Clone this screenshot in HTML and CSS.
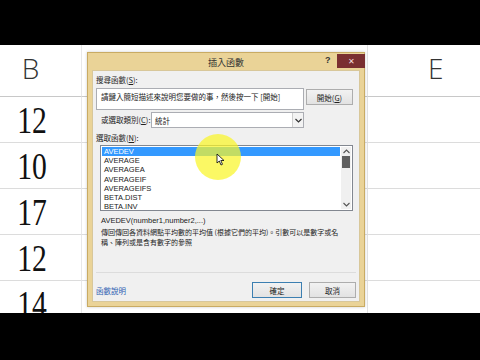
FILE: index.html
```html
<!DOCTYPE html>
<html>
<head>
<meta charset="utf-8">
<link rel="stylesheet" href="styles.css">
</head>
<body>
<div class="screen">
  <div class="bar-top"></div>
  <div class="sheet">
    <div class="cell head colb">B</div>
    <div class="cell head mid"></div>
    <div class="cell head cole">E</div>
    <div class="cell num colb"><span>12</span></div><div class="cell mid"></div><div class="cell cole"></div>
    <div class="cell num colb"><span>10</span></div><div class="cell mid"></div><div class="cell cole"></div>
    <div class="cell num colb"><span>17</span></div><div class="cell mid"></div><div class="cell cole"></div>
    <div class="cell num colb"><span>12</span></div><div class="cell mid"></div><div class="cell cole"></div>
    <div class="cell num colb last"><span>14</span></div><div class="cell mid last"></div><div class="cell cole last"></div>
  </div>
  <div class="bar-bottom"></div>

  <div class="dialog">
    <div class="titlebar">
      <span class="title">插入函數</span>
      <span class="help">?</span>
      <span class="close">✕</span>
    </div>
    <div class="client">
      <div class="lbl">搜尋函數(<u>S</u>):</div>
      <div class="row search-row">
        <div class="textbox">請鍵入簡短描述來說明您要做的事，然後按一下 [開始]</div>
        <div class="btn go">開始(<u>G</u>)</div>
      </div>
      <div class="row cat-row">
        <span class="lbl cat-lbl">或選取類別(<u>C</u>):</span>
        <div class="select"><span>統計</span><span class="arrow">
          <svg width="7" height="5" viewBox="0 0 7 5"><path d="M0.5 1 L3.5 4 L6.5 1" fill="none" stroke="#333" stroke-width="1.2"/></svg>
        </span></div>
      </div>
      <div class="lbl pick-lbl">選取函數(<u>N</u>):</div>
      <div class="listbox">
        <ul class="items">
          <li class="sel">AVEDEV</li>
          <li>AVERAGE</li>
          <li>AVERAGEA</li>
          <li>AVERAGEIF</li>
          <li>AVERAGEIFS</li>
          <li>BETA.DIST</li>
          <li>BETA.INV</li>
        </ul>
        <div class="scroll">
          <svg class="sarrow" width="7" height="5" viewBox="0 0 7 5"><path d="M0.5 4 L3.5 1 L6.5 4" fill="none" stroke="#555" stroke-width="1.1"/></svg>
          <div class="thumb"></div>
          <div class="track"></div>
          <svg class="sarrow" width="7" height="5" viewBox="0 0 7 5"><path d="M0.5 1 L3.5 4 L6.5 1" fill="none" stroke="#555" stroke-width="1.1"/></svg>
        </div>
      </div>
      <div class="sig">AVEDEV(number1,number2,...)</div>
      <div class="desc">傳回傳回各資料網點平均數的平均值 (根據它們的平均)。引數可以是數字或名稱、陣列或是含有數字的參照</div>
      <div class="footer">
        <a class="link">函數說明</a>
        <div class="btns">
          <div class="btn ok">確定</div>
          <div class="btn">取消</div>
        </div>
      </div>
    </div>
  </div>
  <div class="cursor-glow"></div>
  <svg class="pointer" width="9" height="13" viewBox="0 0 9 13"><path d="M1 1 L1 10 L3.3 8 L5 12 L6.5 11.3 L4.8 7.5 L8 7.5 Z" fill="#fff" stroke="#000" stroke-width="0.8"/></svg>
</div>
</body>
</html>
```

FILE: styles.css
```css
* { box-sizing: border-box; margin: 0; padding: 0; }
html, body { width: 480px; height: 360px; overflow: hidden; background: #000; }
body { font-family: "Liberation Sans", "Noto Sans CJK TC", sans-serif; }
.screen { position: relative; width: 480px; height: 360px; display: flex; flex-direction: column; }
.bar-top { height: 45px; background: #000; }
.bar-bottom { flex: 1; background: #000; }
.sheet {
  height: 268px; background: #fff; overflow: hidden;
  display: grid; grid-template-columns: 82px 286px 112px;
  grid-template-rows: 52px 46px 46px 46px 46px 46px;
}
.cell { border-bottom: 1px solid #dcdcdc; }
.cell.head { border-bottom: 1px solid #c8c8c8; display: flex; align-items: center; justify-content: center;
  font-family: "Open Sans", "Liberation Sans", sans-serif; font-size: 28px; color: #333; font-weight: 300; padding-bottom: 6px; }
.head.colb { padding-right: 20px; }
.colb { border-right: 1px solid #e8e8e8; }
.mid { border-right: 1px solid #e2e2e2; }
.head.cole { justify-content: flex-start; padding-left: 60px; }
.num { font-family: "Liberation Serif", serif; font-size: 38px; color: #111; display: flex; align-items: center; justify-content: center; padding-right: 18px; padding-top: 1px; }
.num span { display: inline-block; transform: scaleX(0.78); line-height: 1; }
.num.last { align-items: flex-start; padding-top: 4px; }
.cell.last { border-bottom: none; }

.dialog {
  position: absolute; left: 87px; top: 52px; width: 278px; height: 255px;
  background: #ead397; border: 1px solid #c9ab63;
  padding: 0 4px 4px 4px; display: flex; flex-direction: column;
  box-shadow: 0 0 3px rgba(0,0,0,0.2);
}
.titlebar { height: 17px; position: relative; flex: none; }
.title { position: absolute; left: 0; right: 0; top: 4px; text-align: center; font-family: "Noto Sans CJK TC", sans-serif; font-size: 9px; color: #333; line-height: 11px; }
.help { position: absolute; left: 233px; top: 2px; font-family: "Liberation Sans", sans-serif; font-weight: bold; font-size: 9px; color: #333; }
.close { position: absolute; left: 245px; top: 1px; width: 28px; height: 14px; background: #7a2f31; color: #f4dede; font-size: 8px; display: flex; align-items: center; justify-content: center; }

.client { flex: 1; background: #f0f0f0; border: 1px solid #d8c79a; padding: 4px 3px 0 3px; display: flex; flex-direction: column;
  font-family: "Noto Sans CJK TC", sans-serif; font-size: 7.5px; color: #222; }
.lbl { font-size: 7.5px; line-height: 10px; color: #222; }
u { text-decoration: underline; }
.row { display: flex; }
.search-row { margin-top: 3px; align-items: flex-start; justify-content: space-between; }
.textbox { width: 208px; height: 22px; background: #fff; border: 1px solid #abadb3; padding: 3px 4px; font-size: 7.5px; line-height: 10px; }
.btn { border: 1px solid #adadad; background: linear-gradient(#f2f2f2, #e2e2e2); font-size: 7.5px; display: flex; align-items: center; justify-content: center; height: 16px; width: 47px; }
.go { margin-right: 3px; margin-top: 1px; }
.cat-row { margin-top: 2px; align-items: center; }
.cat-lbl { margin-left: 5px; width: 50px; }
.select { width: 153px; height: 16px; background: #fff; border: 1px solid #abadb3; display: flex; align-items: center; justify-content: space-between; padding-left: 3px; font-size: 7.5px; }
.arrow { width: 11px; height: 14px; border-left: 1px solid #cfcfcf; background: #f3f3f3; display: flex; align-items: center; justify-content: center; }
.pick-lbl { margin-top: 5px; }
.listbox { margin: 2px 3px 0 4px; height: 66px; border: 1px solid #828790; background: #fff; display: flex; padding: 1px; }
.items { list-style: none; flex: 1; font-family: "Liberation Sans", sans-serif; font-size: 7.5px; color: #222; }
.items li { height: 9.2px; line-height: 9.2px; padding-left: 2px; }
.items li.sel { background: #3399ff; color: #fff; }
.scroll { width: 10px; display: flex; flex-direction: column; align-items: center; background: #f0f0f0; margin-left: 1px; }
.sarrow { margin: 2px 0; }
.thumb { width: 8px; height: 12px; background: #606060; }
.track { flex: 1; }
.sig { margin-top: 5px; margin-left: 5px; font-family: "Liberation Sans", sans-serif; font-size: 7.5px; line-height: 10px; }
.desc { margin-top: 1px; margin-left: 5px; margin-right: 6px; font-size: 7px; line-height: 10px; }
.footer { margin-top: auto; border-top: 1px solid #dcdcdc; height: 29px; display: flex; align-items: center; justify-content: space-between; padding: 8px 0 2px 0; }
.link { color: #2a5db0; font-size: 7.5px; }
.btns { display: flex; gap: 7px; margin-right: 0; }
.btn.ok { width: 50px; border-color: #3c7fb1; }

.cursor-glow { position: absolute; left: 195px; top: 134px; width: 46px; height: 46px; border-radius: 50%; background: rgba(250, 245, 40, 0.72); }
.pointer { position: absolute; left: 216px; top: 153px; }
```
